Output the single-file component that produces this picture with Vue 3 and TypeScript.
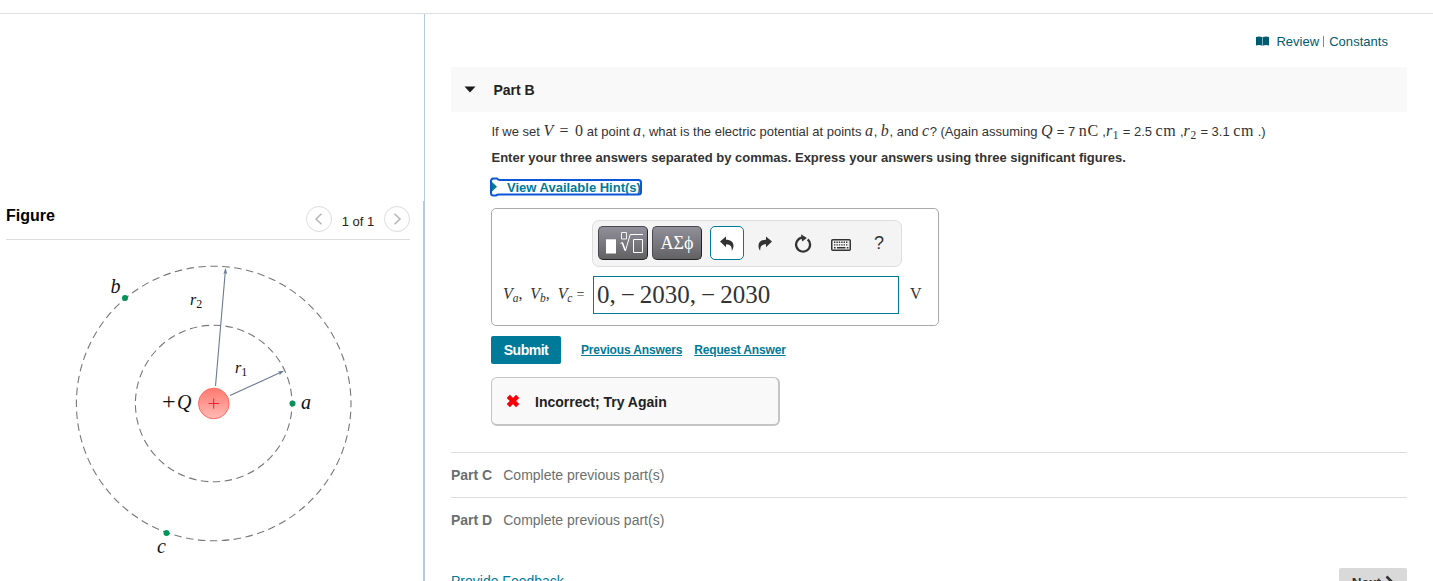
<script setup lang="ts">
interface LockedPart {
  name: string
  status: string
}

interface FigurePoint {
  label: string
  x: number
  y: number
  labelX: number
  labelY: number
}

const lockedParts: LockedPart[] = [
  { name: 'Part C', status: 'Complete previous part(s)' },
  { name: 'Part D', status: 'Complete previous part(s)' },
]

const points: FigurePoint[] = [
  { label: 'a', x: 292.5, y: 403.5, labelX: 301, labelY: 409 },
  { label: 'b', x: 125, y: 298, labelX: 110.5, labelY: 293 },
  { label: 'c', x: 166.5, y: 533, labelX: 157, labelY: 553 },
]

const answer = '0, − 2030, − 2030'
</script>

<template>
  <div class="page">
    <div class="topbar"></div>
    <div class="columns">
      <aside class="side">
        <section class="figure">
          <header class="figure-head">
            <h2>Figure</h2>
            <div class="pager">
              <button class="round" aria-label="Previous figure">
                <svg width="26" height="26" viewBox="0 0 26 26"><path d="M15.500 7.800 10 13l5.500 5.200" /></svg>
              </button>
              <span class="count">1 of 1</span>
              <button class="round" aria-label="Next figure">
                <svg width="26" height="26" viewBox="0 0 26 26"><path d="M10.500 7.800 16 13l-5.500 5.200" /></svg>
              </button>
            </div>
          </header>
          <svg class="diagram" width="423" height="341" viewBox="0 240 423 341">
            <defs>
              <linearGradient id="charge" x1="0" y1="0" x2="0" y2="1">
                <stop offset="0" stop-color="#ff7a70" />
                <stop offset="1" stop-color="#ffbab5" />
              </linearGradient>
            </defs>
            <g class="orbit">
              <circle cx="213.700" cy="403.500" r="137.300" stroke-dasharray="7.500 4.483" stroke-dashoffset="3.750" />
              <circle cx="213.700" cy="403.500" r="78.300" stroke-dasharray="7.500 4.499" stroke-dashoffset="3.750" />
            </g>
            <g class="arrow">
              <path d="M215.500 386 225.500 269" />
              <path d="M230 395.500 283 371.300" />
              <path class="head" d="M225.700 268l-2.300 6 2 -1.200 1.800 1.500z" />
              <path class="head" d="M284 370.700l-6 .9 1.700 1.500-.2 2.200z" />
            </g>
            <circle cx="213.800" cy="403.500" r="15.300" fill="url(#charge)" stroke="#ff6a60" />
            <path d="M208.500 403.500h10.500M213.700 398.500v10.200" stroke="#f02030" stroke-width="1" />
            <g class="label">
              <text x="162" y="409" font-size="24" class="upright">+</text>
              <text x="177" y="409" font-size="20">Q</text>
              <text x="190" y="305" font-size="16">r<tspan class="upright" dy="3" font-size="12">2</tspan></text>
              <text x="235" y="373" font-size="16">r<tspan class="upright" dy="3" font-size="12">1</tspan></text>
            </g>
            <g v-for="p in points" :key="p.label" class="label">
              <circle :cx="p.x" :cy="p.y" r="3" fill="#00945a" />
              <text :x="p.labelX" :y="p.labelY" font-size="20">{{ p.label }}</text>
            </g>
          </svg>
        </section>
      </aside>

      <main class="main">
        <nav class="resources">
          <svg width="13" height="10" viewBox="0 0 13 10">
            <path d="M0 1Q3 0 6 1v8.500Q3 8.500 0 9.500zM7 1q3-1 6 0v8.500q-3-1-6 0z" fill="#005a70" />
            <path d="M6.500 1v9" stroke="#7db0bd" />
          </svg>
          <a>Review</a><i></i><a class="constants">Constants</a>
        </nav>

        <header class="part-head">
          <svg width="12" height="7" viewBox="0 0 12 7"><path d="M.5.500h11L6 6.500z" fill="#1c1c1c" /></svg>
          <h3>Part B</h3>
        </header>

        <div class="part-body">
          <p class="question">
            <span>If we set&nbsp;</span><span class="m eq"><em>V</em> = 0</span><span>&nbsp;at point&nbsp;</span><em class="m">a</em><span>, what is the electric potential at points&nbsp;</span><em class="m">a</em><span>,&nbsp;</span><em class="m">b</em><span>, and&nbsp;</span><em class="m">c</em><span>? (Again assuming&nbsp;</span><em class="m">Q</em><span>&nbsp;= 7&nbsp;</span><b class="m">nC</b><span>&nbsp;,</span><em class="m">r<sub>1</sub></em><span>&nbsp;= 2.5&nbsp;</span><b class="m">cm</b><span>&nbsp;,</span><em class="m">r<sub>2</sub></em><span>&nbsp;= 3.1&nbsp;</span><b class="m">cm</b><span>&nbsp;.)</span>
          </p>
          <p class="instruction">Enter your three answers separated by commas. Express your answers using three significant figures.</p>

          <a class="hints">
            <svg class="hint-frame" width="154" height="20" viewBox="0 0 154 20">
              <path d="M2 4Q2 1.500 4.500 1.500h3.500Q9 3 11 3h138.500q2.500 0 2.500 2.500v9.500q0 2.500-2.500 2.500H10q-2 0-3 1H4.500q-2.500 0-2.500-2.500z" fill="none" stroke="#0b57d8" stroke-width="2" />
              <path d="M3 5v9.500L8 9.800z" fill="#007a99" />
            </svg>
            <span>View Available Hint(s)</span>
          </a>

          <section class="answer">
            <div class="toolbar">
              <button class="dark" aria-label="Templates">
                <svg width="50" height="34" viewBox="0 0 50 34" fill="none" stroke="#fff">
                  <path d="M8 13.300h10v14.200H8z" fill="#fff" stroke="none" />
                  <path d="M23.500 6.500h5v6.500h-5z" stroke-width=".9" />
                  <path d="M22.500 17.500l1.800-1" />
                  <path d="M24.200 16.500l3 8" stroke-width="1.600" />
                  <path d="M27.400 25 32.200 8.500H45" />
                  <path d="M35.500 13.500h9v13h-9z" />
                </svg>
              </button>
              <button class="dark symbols">ΑΣϕ</button>
              <button class="tool active" aria-label="Undo">
                <svg width="14" height="15" viewBox="0 0 14 15"><path d="M0 5.500 6 .5v3.200c5 0 7.500 2.500 7.500 6 0 2-.7 3.600-1.700 5.100.2-4.300-1.300-6.300-5.800-6.500v3z" /></svg>
              </button>
              <button class="tool" aria-label="Redo">
                <svg width="14" height="15" viewBox="0 0 14 15"><path d="M14 5.500 8 .5v3.200c-5 0-7.500 2.500-7.500 6 0 2 .7 3.600 1.700 5.100C2 10.500 3.500 8.500 8 8.300v3z" /></svg>
              </button>
              <button class="tool" aria-label="Reset">
                <svg width="18" height="19" viewBox="0 0 18 19">
                  <path d="M13.700 5.300A7 7 0 1 1 8.500 3.600" fill="none" stroke="#333" stroke-width="2.300" />
                  <path d="M7 .3 12.900 3.900 8.200 7.600z" />
                </svg>
              </button>
              <button class="tool keyboard" aria-label="Keyboard">
                <svg width="20" height="12" viewBox="0 0 20 12">
                  <rect x=".75" y=".75" width="18.500" height="10.500" rx="1" fill="none" stroke="#333" stroke-width="1.500" />
                  <path d="M3 3.300h14.500M3 5.900h14.500" stroke="#333" stroke-width="1.400" stroke-dasharray="1.400 1" />
                  <path d="M3 8.700h1.600M6 8.700h8.500M15.800 8.700h1.600" stroke="#333" stroke-width="1.400" />
                </svg>
              </button>
              <button class="tool help">?</button>
            </div>
            <div class="entry">
              <span class="vars"><em>V<sub>a</sub></em>,&nbsp; <em>V<sub>b</sub></em>,&nbsp; <em>V<sub>c</sub></em> <small>=</small></span>
              <div class="field"><span>{{ answer }}</span></div>
              <span class="unit">V</span>
            </div>
          </section>

          <div class="actions">
            <button class="submit">Submit</button>
            <a>Previous Answers</a>
            <a>Request Answer</a>
          </div>

          <div class="feedback">
            <svg width="14" height="14" viewBox="0 0 14 14"><path d="M2.300 2.300 11.700 11.700M11.700 2.300 2.300 11.700" stroke="#f50008" stroke-width="4.500" /></svg>
            <strong>Incorrect; Try Again</strong>
          </div>
        </div>

        <div v-for="part in lockedParts" :key="part.name" class="locked">
          <strong>{{ part.name }}</strong><span>{{ part.status }}</span>
        </div>

        <footer class="foot">
          <a>Provide Feedback</a>
          <button class="next">
            <span>Next</span>
            <svg width="9" height="14" viewBox="0 0 9 14"><path d="M1.500 1.500 7 7l-5.500 5.500" fill="none" stroke="#333" stroke-width="2.600" /></svg>
          </button>
        </footer>
      </main>
    </div>
  </div>
</template>

<style>
body {
  margin: 0;
  overflow: hidden;
  background: #fff;
}
</style>

<style scoped>
* {
  box-sizing: border-box;
}
.page {
  height: 581px;
  overflow: hidden;
  display: flex;
  flex-direction: column;
  font-family: "Liberation Sans", Arial, sans-serif;
  color: #333;
  white-space: nowrap;
}
button {
  border: 0;
  padding: 0;
  margin: 0;
  font: inherit;
  display: flex;
  align-items: center;
  justify-content: center;
}
p, h2, h3 {
  margin: 0;
}
svg {
  display: block;
  flex: none;
}
.topbar {
  height: 14px;
  flex: none;
  border-bottom: 1px solid #ddd;
}
.columns {
  flex: 1;
  min-height: 0;
  display: flex;
}
.side {
  width: 425px;
  flex: none;
  padding-top: 187px;
  border-right: 1px solid #b5cbe0;
}
.figure {
  height: 380px;
  border-right: 1px solid #b5cbe0;
}
.figure-head {
  height: 39px;
  margin: 0 13px 0 6px;
  border-bottom: 1px solid #ddd;
  display: flex;
  justify-content: space-between;
}
.figure-head h2 {
  font-size: 16px;
  line-height: 20px;
  padding-top: 5px;
  color: #000;
}
.pager {
  display: flex;
  padding-top: 5px;
}
.round {
  width: 26px;
  height: 26px;
  border-radius: 50%;
  background: #fff;
  border: 1px solid #ddd;
}
.round path {
  fill: none;
  stroke: #b4b4b4;
  stroke-width: 1.500;
}
.count {
  width: 52px;
  text-align: center;
  font-size: 13px;
  line-height: 32px;
  color: #222;
}
.orbit circle {
  fill: none;
  stroke: #777;
  stroke-width: 1.100;
}
.arrow path {
  fill: none;
  stroke: #6c7b92;
  stroke-width: 1.100;
}
.arrow .head {
  fill: #6c7b92;
  stroke: none;
}
.label {
  font-family: "Liberation Serif", serif;
  font-style: italic;
  fill: #111;
}
.upright {
  font-style: normal;
}
.main {
  flex: 1;
  padding: 0 26px;
}
.resources {
  height: 53px;
  padding: 18px 19px 0 0;
  display: flex;
  justify-content: flex-end;
  font-size: 13px;
  line-height: 20px;
  letter-spacing: .03px;
  color: #005a70;
}
.resources svg {
  margin: 4px 7px 0 0;
}
.resources i {
  width: 1px;
  height: 11px;
  margin: 4px 5px 0 4px;
  background: #888;
}
.part-head {
  height: 45px;
  background: #f9f9f9;
  display: flex;
  align-items: center;
  padding-left: 13px;
}
.part-head h3 {
  margin-left: 17.500px;
  font-size: 14px;
  color: #222;
}
.part-body {
  height: 340px;
  padding: 9px 0 0 40px;
}
.question {
  height: 24px;
  display: flex;
  align-items: baseline;
  font-size: 13px;
  line-height: 20px;
  padding-left: .5px;
}
.m {
  font-family: "Liberation Serif", serif;
  font-size: 16px;
  font-weight: normal;
  letter-spacing: .6px;
}
.eq {
  letter-spacing: .3px;
  word-spacing: 1.700px;
}
.question sub {
  font-style: normal;
}
sub {
  font-size: .72em;
  line-height: 0;
  vertical-align: -3px;
}
.instruction {
  padding: 3px 0 0 .5px;
  height: 33px;
  font-size: 13px;
  line-height: 20px;
  font-weight: bold;
}
.hints {
  width: 154px;
  height: 20px;
  margin: -1px 0 0 -2px;
  position: relative;
  display: block;
  padding-left: 18px;
  font-size: 13px;
  line-height: 22px;
  font-weight: bold;
  color: #007a99;
}
.hint-frame {
  position: absolute;
  left: 0;
  top: 0;
}
.answer {
  width: 448px;
  height: 118px;
  margin-top: 11px;
  border: 1px solid #aaa;
  border-radius: 5px;
  padding: 11px 0 0 10px;
}
.toolbar {
  width: 310px;
  height: 47px;
  margin-left: 90px;
  border: 1px solid #ddd;
  border-radius: 7px;
  background: #f4f4f4;
  display: flex;
  align-items: flex-start;
  padding: 5px;
  gap: 4px;
}
.dark {
  width: 50px;
  height: 34px;
  border-radius: 5px;
  border: 1px solid #4b4950;
  border-right-color: #222;
  border-bottom-color: #222;
  background: linear-gradient(#918f99, #626264);
  color: #fff;
}
.symbols {
  font-family: "Liberation Serif", serif;
  font-size: 18px;
}
.tool {
  width: 34px;
  height: 34px;
  border-radius: 5px;
  background: transparent;
  color: #333;
  fill: #333;
}
.tool.active {
  margin-left: 4px;
  border: 1px solid #007a99;
  background: #fff;
}
.keyboard {
  padding-top: 4px;
}
.help {
  font-size: 18px;
}
.entry {
  display: flex;
  margin-top: 9px;
  font-family: "Liberation Serif", serif;
}
.vars {
  width: 91px;
  padding-left: 1px;
  font-size: 16px;
  line-height: 36px;
  letter-spacing: -.05px;
}
.vars small {
  font-size: 14px;
}
.field {
  width: 306px;
  height: 38px;
  border: 1px solid #007a99;
  padding-left: 3px;
  font-size: 25px;
  line-height: 36px;
  word-spacing: -1.250px;
}
.unit {
  margin-left: 11px;
  font-size: 16px;
  line-height: 36px;
}
.actions {
  display: flex;
  align-items: center;
  height: 28px;
  margin-top: 10px;
  gap: 12px;
  font-size: 12px;
  font-weight: bold;
  color: #007a99;
}
.actions a {
  text-decoration: underline;
  letter-spacing: -.15px;
}
.submit {
  width: 70px;
  height: 28px;
  margin-right: 8px;
  border-radius: 2px;
  background: #007a99;
  color: #fff;
  font-size: 14px;
  letter-spacing: -.5px;
}
.feedback {
  width: 289px;
  height: 49px;
  margin-top: 13px;
  border: 1px solid #c4c4c4;
  border-right-width: 2px;
  border-bottom-width: 2px;
  border-radius: 6px;
  background: #f9f9f9;
  display: flex;
  align-items: center;
  padding-left: 14px;
  gap: 15px;
  font-size: 14px;
  color: #222;
}
.feedback strong {
  padding-top: 2px;
}
.locked {
  height: 45px;
  border-top: 1px solid #ddd;
  font-size: 14px;
  line-height: 44px;
  color: #6a7070;
}
.locked strong {
  margin-right: 11px;
}
.foot {
  display: flex;
  justify-content: space-between;
  padding-top: 26px;
}
.foot a {
  font-size: 14px;
  line-height: 26px;
  color: #007a99;
}
.next {
  width: 68px;
  height: 28px;
  border-radius: 2px;
  background: #d9d9d9;
  font-size: 13.500px;
  font-weight: bold;
  color: #333;
  gap: 4px;
}
</style>
